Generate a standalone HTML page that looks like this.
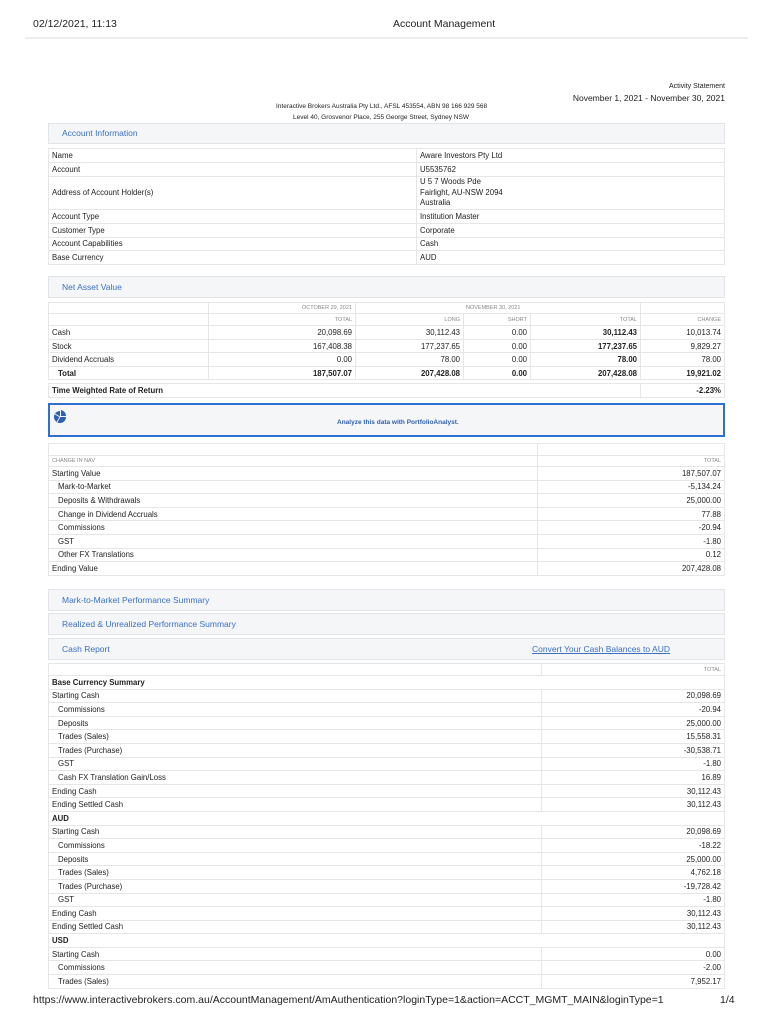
<!DOCTYPE html>
<html><head><meta charset="utf-8"><style>
*{margin:0;padding:0;box-sizing:border-box}
body{width:770px;height:1024px;background:#fff;font-family:"Liberation Sans",sans-serif;color:#222;position:relative;overflow:hidden}
.a{position:absolute;white-space:nowrap}
.s{font-size:7.5px}
.box{position:absolute;left:48px;width:677px;background:#f5f6f8;border:1px solid #e2e4e8;color:#3a6fc4;font-size:8.5px;padding-left:13px}
table{position:absolute;left:48px;width:677px;border-collapse:collapse;font-size:7.8px;table-layout:fixed}
td{border:1px solid #e6e6e6;padding:0 3px;vertical-align:middle;white-space:nowrap;overflow:hidden}
td.r{text-align:right}
td.i{padding-left:9px}
.b{font-weight:bold}
.h td{font-size:5.5px;color:#888}
</style></head><body>
<div class="a" style="left:33px;top:18px;font-size:10.5px">02/12/2021, 11:13</div>
<div class="a" style="left:393px;top:18px;font-size:10.5px">Account Management</div>
<div class="a" style="left:25px;top:37px;width:723px;height:2px;background:#eceef1"></div>
<div class="a s" style="right:45px;top:83px;font-size:7px">Activity Statement</div>
<div class="a" style="right:45px;top:93px;font-size:8.5px">November 1, 2021 - November 30, 2021</div>
<div class="a" style="left:276px;top:103px;font-size:6.5px">Interactive Brokers Australia Pty Ltd., AFSL 453554, ABN 98 166 929 568</div>
<div class="a" style="left:293px;top:114px;font-size:6.5px">Level 40, Grosvenor Place, 255 George Street, Sydney NSW</div>

<div class="box" style="top:123px;height:21px;line-height:19px">Account Information</div>
<table style="top:148px"><colgroup><col style="width:368px"><col></colgroup>
<tr style="height:14px"><td>Name</td><td>Aware Investors Pty Ltd</td></tr>
<tr style="height:14px"><td>Account</td><td>U5535762</td></tr>
<tr style="height:32px"><td>Address of Account Holder(s)</td><td style="line-height:10.5px">U 5 7 Woods Pde<br>Fairlight, AU-NSW 2094<br>Australia</td></tr>
<tr style="height:14px"><td>Account Type</td><td>Institution Master</td></tr>
<tr style="height:14px"><td>Customer Type</td><td>Corporate</td></tr>
<tr style="height:13px"><td>Account Capabilities</td><td>Cash</td></tr>
<tr style="height:14px"><td>Base Currency</td><td>AUD</td></tr>
</table>

<div class="box" style="top:276px;height:22px;line-height:20px">Net Asset Value</div>
<table style="top:302px"><colgroup><col style="width:160px"><col style="width:147px"><col style="width:108px"><col style="width:67px"><col style="width:110px"><col></colgroup>
<tr class="h" style="height:11px"><td></td><td class="r">OCTOBER 29, 2021</td><td colspan="3" style="padding-left:110px">NOVEMBER 30, 2021</td><td></td></tr>
<tr class="h" style="height:12px"><td></td><td class="r">TOTAL</td><td class="r">LONG</td><td class="r">SHORT</td><td class="r">TOTAL</td><td class="r">CHANGE</td></tr>
<tr style="height:14px"><td>Cash</td><td class="r">20,098.69</td><td class="r">30,112.43</td><td class="r">0.00</td><td class="r b">30,112.43</td><td class="r">10,013.74</td></tr>
<tr style="height:13px"><td>Stock</td><td class="r">167,408.38</td><td class="r">177,237.65</td><td class="r">0.00</td><td class="r b">177,237.65</td><td class="r">9,829.27</td></tr>
<tr style="height:14px"><td>Dividend Accruals</td><td class="r">0.00</td><td class="r">78.00</td><td class="r">0.00</td><td class="r b">78.00</td><td class="r">78.00</td></tr>
<tr style="height:13px" class="b"><td class="i">Total</td><td class="r">187,507.07</td><td class="r">207,428.08</td><td class="r">0.00</td><td class="r">207,428.08</td><td class="r">19,921.02</td></tr>
</table>
<table style="top:383px"><colgroup><col style="width:592px"><col></colgroup>
<tr style="height:14px" class="b"><td>Time Weighted Rate of Return</td><td class="r">-2.23%</td></tr></table>

<div class="a" style="left:48px;top:403px;width:677px;height:34px;border:2px solid #2f6fd0;background:#f5f6f8"></div>
<svg class="a" style="left:54px;top:410px" width="12" height="14" viewBox="0 0 12 14"><path d="M6 1A6 6 0 1 0 12 7H6Z" fill="#2f5fb0"/><path d="M7 0V6h5A6 6 0 0 0 7 0Z" fill="#2f5fb0"/><path d="M6 7L1 4M6 7L3 12" stroke="#fff" stroke-width="0.8"/></svg>
<div class="a b" style="left:337px;top:419px;font-size:6.5px;color:#2f5fb0">Analyze this data with PortfolioAnalyst.</div>

<table style="top:443px"><colgroup><col style="width:489px"><col></colgroup>
<tr style="height:12px"><td></td><td></td></tr>
<tr class="h" style="height:11px"><td>CHANGE IN NAV</td><td class="r">TOTAL</td></tr>
<tr style="height:13.6px"><td>Starting Value</td><td class="r">187,507.07</td></tr>
<tr style="height:13.6px"><td class="i">Mark-to-Market</td><td class="r">-5,134.24</td></tr>
<tr style="height:13.6px"><td class="i">Deposits &amp; Withdrawals</td><td class="r">25,000.00</td></tr>
<tr style="height:13.6px"><td class="i">Change in Dividend Accruals</td><td class="r">77.88</td></tr>
<tr style="height:13.6px"><td class="i">Commissions</td><td class="r">-20.94</td></tr>
<tr style="height:13.6px"><td class="i">GST</td><td class="r">-1.80</td></tr>
<tr style="height:13.6px"><td class="i">Other FX Translations</td><td class="r">0.12</td></tr>
<tr style="height:13.6px"><td>Ending Value</td><td class="r">207,428.08</td></tr>
</table>

<div class="box" style="top:589px;height:22px;line-height:20px">Mark-to-Market Performance Summary</div>
<div class="box" style="top:613px;height:22px;line-height:20px">Realized &amp; Unrealized Performance Summary</div>
<div class="box" style="top:638px;height:22px;line-height:20px">Cash Report<span style="position:absolute;left:483px;text-decoration:underline">Convert Your Cash Balances to AUD</span></div>

<table style="top:663px"><colgroup><col style="width:493px"><col></colgroup>
<tr class="h" style="height:12px"><td></td><td class="r">TOTAL</td></tr>
<tr style="height:13.6px" class="b"><td colspan="2">Base Currency Summary</td></tr>
<tr style="height:13.6px"><td>Starting Cash</td><td class="r">20,098.69</td></tr>
<tr style="height:13.6px"><td class="i">Commissions</td><td class="r">-20.94</td></tr>
<tr style="height:13.6px"><td class="i">Deposits</td><td class="r">25,000.00</td></tr>
<tr style="height:13.6px"><td class="i">Trades (Sales)</td><td class="r">15,558.31</td></tr>
<tr style="height:13.6px"><td class="i">Trades (Purchase)</td><td class="r">-30,538.71</td></tr>
<tr style="height:13.6px"><td class="i">GST</td><td class="r">-1.80</td></tr>
<tr style="height:13.6px"><td class="i">Cash FX Translation Gain/Loss</td><td class="r">16.89</td></tr>
<tr style="height:13.6px"><td>Ending Cash</td><td class="r">30,112.43</td></tr>
<tr style="height:13.6px"><td>Ending Settled Cash</td><td class="r">30,112.43</td></tr>
<tr style="height:13.6px" class="b"><td colspan="2">AUD</td></tr>
<tr style="height:13.6px"><td>Starting Cash</td><td class="r">20,098.69</td></tr>
<tr style="height:13.6px"><td class="i">Commissions</td><td class="r">-18.22</td></tr>
<tr style="height:13.6px"><td class="i">Deposits</td><td class="r">25,000.00</td></tr>
<tr style="height:13.6px"><td class="i">Trades (Sales)</td><td class="r">4,762.18</td></tr>
<tr style="height:13.6px"><td class="i">Trades (Purchase)</td><td class="r">-19,728.42</td></tr>
<tr style="height:13.6px"><td class="i">GST</td><td class="r">-1.80</td></tr>
<tr style="height:13.6px"><td>Ending Cash</td><td class="r">30,112.43</td></tr>
<tr style="height:13.6px"><td>Ending Settled Cash</td><td class="r">30,112.43</td></tr>
<tr style="height:13.6px" class="b"><td colspan="2">USD</td></tr>
<tr style="height:13.6px"><td>Starting Cash</td><td class="r">0.00</td></tr>
<tr style="height:13.6px"><td class="i">Commissions</td><td class="r">-2.00</td></tr>
<tr style="height:13.6px"><td class="i">Trades (Sales)</td><td class="r">7,952.17</td></tr>
</table>

<div class="a" style="left:33px;top:994px;font-size:10.5px">https://www.interactivebrokers.com.au/AccountManagement/AmAuthentication?loginType=1&amp;action=ACCT_MGMT_MAIN&amp;loginType=1</div>
<div class="a" style="left:720px;top:994px;font-size:10.5px">1/4</div>
</body></html>
